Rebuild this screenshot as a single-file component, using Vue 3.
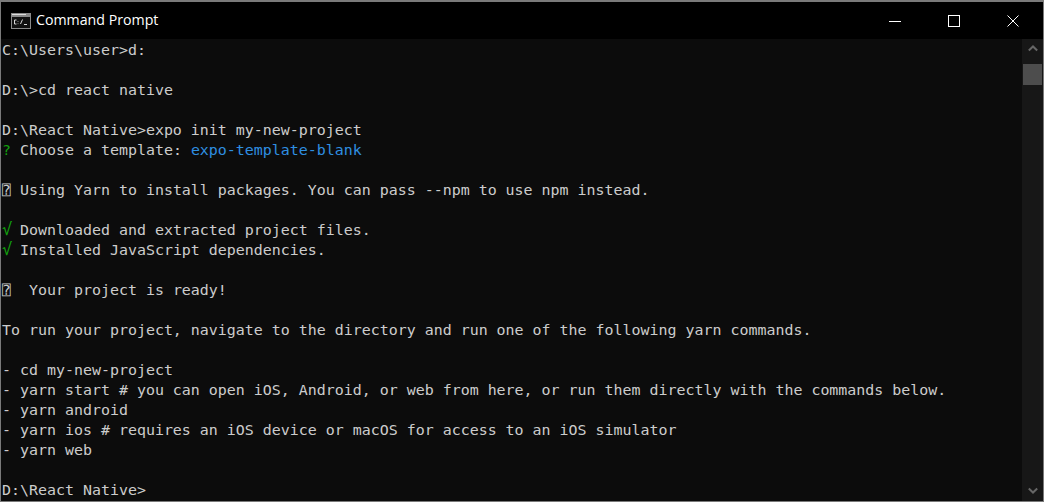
<script setup>
const lines = [
  [{ t: 'C:\\Users\\user>d:' }],
  [],
  [{ t: 'D:\\>cd react native' }],
  [],
  [{ t: 'D:\\React Native>expo init my-new-project' }],
  [{ t: '?', c: 'green' }, { t: ' Choose a template: ' }, { t: 'expo-template-blank', c: 'blue' }],
  [],
  [{ t: '⍰', c: 'box' }, { t: ' Using Yarn to install packages. You can pass --npm to use npm instead.' }],
  [],
  [{ t: '√', c: 'green check' }, { t: ' Downloaded and extracted project files.' }],
  [{ t: '√', c: 'green check' }, { t: ' Installed JavaScript dependencies.' }],
  [],
  [{ t: '⍰', c: 'box' }, { t: '  Your project is ready!' }],
  [],
  [{ t: 'To run your project, navigate to the directory and run one of the following yarn commands.' }],
  [],
  [{ t: '- cd my-new-project' }],
  [{ t: '- yarn start # you can open iOS, Android, or web from here, or run them directly with the commands below.' }],
  [{ t: '- yarn android' }],
  [{ t: '- yarn ios # requires an iOS device or macOS for access to an iOS simulator' }],
  [{ t: '- yarn web' }],
  [],
  [{ t: 'D:\\React Native>' }]
]
</script>

<template>
  <div class="window">
    <header class="titlebar">
      <svg class="appicon" width="20" height="16" viewBox="0 0 20 16">
        <rect x="0" y="0" width="20" height="16" fill="#8a8a8a" />
        <rect x="1" y="4" width="18" height="11" fill="#111" />
        <path d="M1 1.500h14" stroke="#dcdcdc" stroke-width="1" />
        <path d="M3.500 7v4M3.500 7h2M3.500 11h2M7 8v.6M7 10.500v.6M9.500 11l2-4.500M13 11.500h3" stroke="#d8d8d8" stroke-width="1" fill="none" />
      </svg>
      <span class="title">Command Prompt</span>
      <div class="controls">
        <button class="ctl" aria-label="Minimize">
          <svg width="12" height="12" viewBox="0 0 12 12"><path d="M0 6.500h12" stroke="#fff" /></svg>
        </button>
        <button class="ctl" aria-label="Maximize">
          <svg width="12" height="12" viewBox="0 0 12 12"><rect x=".5" y=".5" width="11" height="11" fill="none" stroke="#fff" /></svg>
        </button>
        <button class="ctl" aria-label="Close">
          <svg width="12" height="12" viewBox="0 0 12 12"><path d="M.5.500l11 11M11.500.500l-11 11" stroke="#fff" /></svg>
        </button>
      </div>
    </header>
    <div class="body">
      <main class="console">
        <div v-for="(line, i) in lines" :key="i" class="line">
          <span v-for="(s, j) in line" :key="j" :class="s.c">{{ s.t }}</span>
        </div>
      </main>
      <aside class="scrollbar">
        <svg class="arrow" width="10" height="7" viewBox="0 0 10 7"><path d="M.8 5.500L5 1.500l4.200 4" fill="none" stroke="#666" stroke-width="2" /></svg>
        <div class="thumb"></div>
        <div class="track"></div>
        <svg class="arrow" width="10" height="7" viewBox="0 0 10 7"><path d="M.8 1.500L5 5.500l4.200-4" fill="none" stroke="#666" stroke-width="2" /></svg>
      </aside>
    </div>
  </div>
</template>

<style scoped>
.window {
  width: 1044px;
  height: 502px;
  box-sizing: border-box;
  display: flex;
  flex-direction: column;
  background: #0c0c0c;
  border: 1px solid #7a7a7a;
  border-top-width: 2px;
  overflow: hidden;
}
.titlebar {
  height: 37px;
  flex: none;
  display: flex;
  align-items: center;
  background: #000;
  color: #fff;
  padding-left: 10px;
}
.appicon {
  flex: none;
}
.title {
  margin-left: 5px;
  margin-top: -3px;
  font: 14.2px "Open Sans", "Liberation Sans", sans-serif;
}
.controls {
  margin-left: auto;
  display: flex;
  margin-right: 1px;
}
.ctl {
  width: 59px;
  height: 37px;
  padding: 0;
  border: 0;
  background: none;
  display: flex;
  align-items: center;
  justify-content: center;
}
.body {
  flex: 1;
  min-height: 0;
  display: flex;
}
.console {
  flex: 1;
  padding: 1px 0 0 1px;
  font: 14.95px/20px "DejaVu Sans Mono", monospace;
  color: #cccccc;
  white-space: pre;
}
.line {
  height: 20px;
}
.green {
  color: #13a10e;
}
.check {
  display: inline-block;
  width: 9px;
  font-size: 17px;
  line-height: 1;
}
.blue {
  color: #2f8fe0;
}
.box {
  display: inline-block;
  width: 9px;
  font-size: 14px;
}
.scrollbar {
  width: 21px;
  flex: none;
  display: flex;
  flex-direction: column;
  align-items: center;
  background: #171717;
}
.arrow {
  flex: none;
  margin: 6px 0 12px;
}
.thumb {
  width: 19px;
  height: 21px;
  flex: none;
  background: #4d4d4d;
}
.track {
  flex: 1;
}
.scrollbar .arrow:last-child {
  margin: 0 0 7px;
}
</style>
